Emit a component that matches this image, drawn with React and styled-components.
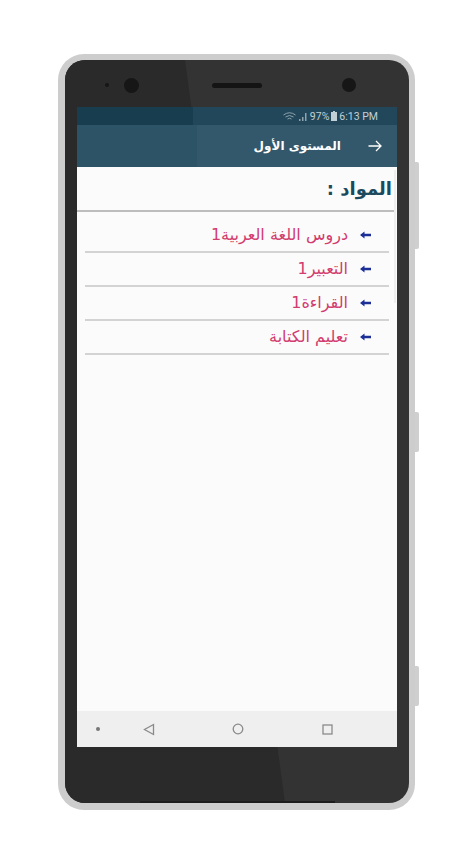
import React from "react";
import styled, { createGlobalStyle } from "styled-components";

const subjects = ["دروس اللغة العربية1", "التعبير1", "القراءة1", "تعليم الكتابة"];

const GlobalStyle = createGlobalStyle`
  html, body {
    margin: 0;
    padding: 0;
    background: #ffffff;
    font-family: "DejaVu Sans", "Noto Sans", sans-serif;
  }
`;

const Page = styled.div`
  width: 474px;
  height: 854px;
  padding: 54px 0 0 58px;
  box-sizing: border-box;
  overflow: hidden;
`;

const Phone = styled.div`
  position: relative;
  width: 357px;
  height: 756px;
  box-sizing: border-box;
  padding: 6px 6px 7px 7px;
  border-radius: 26px;
  background: #cdcdcd;
`;

const SideButton = styled.div`
  position: absolute;
  right: -4px;
  top: ${(p) => p.$top}px;
  width: 4px;
  height: ${(p) => p.$height}px;
  background: #cfcfcf;
  border-radius: 0 2px 2px 0;
`;

const Bezel = styled.div`
  position: relative;
  height: 100%;
  box-sizing: border-box;
  padding: 47px 12px 56px 12px;
  border-radius: 20px;
  background: #333333;
  overflow: hidden;

  &::before {
    content: "";
    position: absolute;
    inset: 0;
    background: #2a2a2a;
    clip-path: polygon(0 0, 120px 0, 220px 100%, 0 100%);
  }

  &::after {
    content: "";
    position: absolute;
    left: 75px;
    bottom: 0;
    width: 195px;
    height: 2px;
    background: #1d1d1d;
  }
`;

const Camera = styled.div`
  position: absolute;
  top: ${(p) => p.$top}px;
  left: ${(p) => p.$left}px;
  width: ${(p) => p.$size}px;
  height: ${(p) => p.$size}px;
  border-radius: 50%;
  background: #161616;
  z-index: 1;
`;

const Speaker = styled.div`
  position: absolute;
  top: 23px;
  left: 147px;
  width: 50px;
  height: 5px;
  border-radius: 3px;
  background: #141414;
  z-index: 1;
`;

const Screen = styled.div`
  position: relative;
  z-index: 1;
  height: 640px;
  display: flex;
  flex-direction: column;
  background: #fbfbfb;
`;

const StatusBar = styled.div`
  height: 18px;
  flex: none;
  display: flex;
  align-items: center;
  justify-content: flex-end;
  gap: 2px;
  padding-right: 19px;
  background: linear-gradient(90deg, #173d4f 0, #173d4f 116px, #22475a 116px);
  color: #c3d0d6;
  font: 400 10.5px "Roboto", sans-serif;
`;

const AppBar = styled.div`
  height: 42px;
  flex: none;
  display: flex;
  align-items: center;
  direction: rtl;
  padding: 0 15px 0 0;
  background: linear-gradient(90deg, #2c5366 0, #2c5366 120px, #33576b 120px);
`;

const AppTitle = styled.div`
  margin-right: 27px;
  color: #ffffff;
  font-size: 12px;
  font-weight: bold;
`;

const SectionTitle = styled.div`
  height: 45px;
  flex: none;
  box-sizing: border-box;
  direction: rtl;
  padding: 8px 2px 0 0;
  margin-right: 3px;
  border-bottom: 2px solid #bdbdbd;
  color: #1b4a5e;
  font-size: 18px;
  font-weight: bold;
  line-height: 28px;
`;

const SubjectList = styled.div`
  flex: 1;
  padding: 7px 8px 0 8px;
  direction: rtl;
`;

const SubjectRow = styled.div`
  height: 34px;
  box-sizing: border-box;
  display: flex;
  align-items: center;
  gap: 12px;
  padding: 0 18px 1px 0;
  border-bottom: 2px solid #d3d3d3;
  color: #d23c6f;
  font-size: 16px;
`;

const ScrollHint = styled.div`
  position: absolute;
  top: 63px;
  right: 1px;
  width: 2px;
  height: 133px;
  background: #eeeeee;
`;

const NavBar = styled.div`
  height: 36px;
  flex: none;
  display: grid;
  grid-template-columns: 42px 60px 117px 62px;
  align-items: center;
  justify-items: center;
  background: #efefef;
`;

const NavDot = styled.div`
  width: 4px;
  height: 4px;
  border-radius: 50%;
  background: #777777;
`;

const ArrowLeft = () => (
  <svg width="11" height="8" viewBox="0 0 11 8">
    <path d="M0 4 L4.5 0.5 V2.8 H11 V5.2 H4.5 V7.5 Z" fill="#1b2f96" />
  </svg>
);

const BackArrow = () => (
  <svg width="14" height="12" viewBox="0 0 14 12" fill="none" stroke="#ffffff" strokeWidth="1.3">
    <path d="M0.5 6 H13 M8 1 L13 6 L8 11" />
  </svg>
);

const App = () => (
  <>
    <GlobalStyle />
    <Page>
      <Phone>
        <SideButton $top={108} $height={87} />
        <SideButton $top={358} $height={40} />
        <SideButton $top={612} $height={40} />
        <Bezel>
          <Camera $top={23} $left={40} $size={4} />
          <Camera $top={18} $left={59} $size={15} />
          <Camera $top={18} $left={277} $size={14} />
          <Speaker />
          <Screen>
            <StatusBar>
              <svg width="13" height="9" viewBox="0 0 13 9" fill="none" stroke="#8ea3ad" strokeWidth="1">
                <path d="M0.5 3 Q6.5 -1.5 12.5 3 M2.5 5 Q6.5 2 10.5 5 M4.5 7 Q6.5 5.5 8.5 7" />
              </svg>
              <svg width="10" height="9" viewBox="0 0 10 9">
                <path d="M1 9 V7 H2.5 V9 Z M4 9 V5 H5.5 V9 Z M7 9 V1 H8.5 V9 Z" fill="#8ea3ad" />
              </svg>
              <span>97%</span>
              <svg width="6" height="10" viewBox="0 0 6 10">
                <path d="M2 0 H4 V1 H6 V10 H0 V1 H2 Z" fill="#c3d0d6" />
              </svg>
              <span>6:13 PM</span>
            </StatusBar>
            <AppBar>
              <BackArrow />
              <AppTitle>المستوى الأول</AppTitle>
            </AppBar>
            <SectionTitle>المواد :</SectionTitle>
            <SubjectList>
              {subjects.map((name) => (
                <SubjectRow key={name}>
                  <ArrowLeft />
                  <span>{name}</span>
                </SubjectRow>
              ))}
            </SubjectList>
            <ScrollHint />
            <NavBar>
              <NavDot />
              <svg width="12" height="13" viewBox="0 0 12 13" fill="none" stroke="#8a8a8a" strokeWidth="1.3">
                <path d="M10.5 1.5 V11.5 L1.5 6.5 Z" />
              </svg>
              <svg width="12" height="12" viewBox="0 0 12 12" fill="none" stroke="#8a8a8a" strokeWidth="1.3">
                <circle cx="6" cy="6" r="4.8" />
              </svg>
              <svg width="11" height="11" viewBox="0 0 11 11" fill="none" stroke="#8a8a8a" strokeWidth="1.3">
                <rect x="1" y="1" width="9" height="9" />
              </svg>
            </NavBar>
          </Screen>
        </Bezel>
      </Phone>
    </Page>
  </>
);

export default App;
